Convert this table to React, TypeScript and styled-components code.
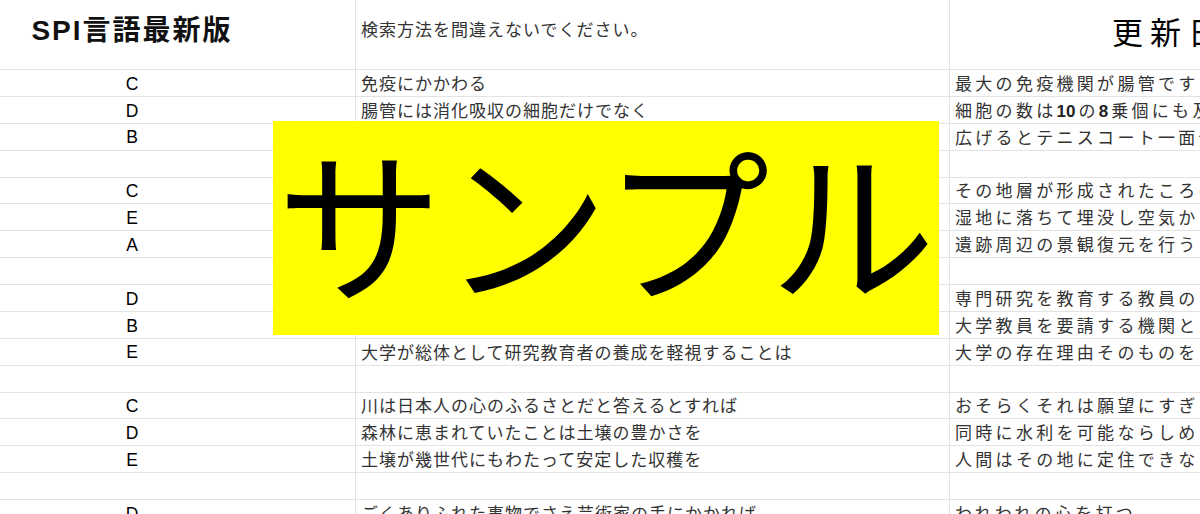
import React from "react";
import styled, { createGlobalStyle } from "styled-components";

const GlobalStyle = createGlobalStyle`
  html, body {
    margin: 0;
    padding: 0;
    background: #ffffff;
    overflow: hidden;
  }
  body {
    width: 1200px;
    height: 514px;
    font-family: "Liberation Sans", "Noto Sans CJK JP", sans-serif;
  }
`;

const Page = styled.div`
  position: relative;
  width: 1200px;
  height: 514px;
  overflow: hidden;
  background: #ffffff;
`;

const Sheet = styled.div`
  display: flex;
  flex-direction: column;
  margin-left: -91px;
  width: 1483px;
`;

const Row = styled.div<{ $header?: boolean }>`
  display: grid;
  grid-template-columns: 447px 594px 442px;
  height: ${(p) => (p.$header ? "70px" : "26.875px")};
  border-bottom: 1px solid #e3e3e3;
  box-sizing: border-box;
  flex: none;
`;

const Cell = styled.div<{ $header?: boolean }>`
  display: flex;
  align-items: center;
  box-sizing: border-box;
  overflow: hidden;
  white-space: nowrap;
  padding-top: ${(p) => (p.$header ? "0" : "3px")};
  padding-bottom: ${(p) => (p.$header ? "8px" : "0")};
`;

const AnswerCell = styled(Cell)`
  justify-content: center;
  border-right: 1px solid #e3e3e3;
  font-family: "Liberation Sans", Arial, sans-serif;
  font-size: 17.5px;
  line-height: 1;
  color: #000;
`;

const TitleText = styled.span`
  font-family: "Liberation Sans", "Noto Sans CJK JP", sans-serif;
  font-weight: 700;
  font-size: 28px;
  letter-spacing: 2px;
  line-height: 1;
  color: #111;
`;

const PhraseCell = styled(Cell)`
  padding-left: 5px;
  border-right: 1px solid #e3e3e3;
  font-family: "Liberation Sans", "Noto Sans CJK JP", sans-serif;
  font-size: 17px;
  letter-spacing: 1px;
  line-height: 1;
  color: #333;
`;

const MeaningCell = styled(Cell)<{ $indent?: number }>`
  padding-left: ${(p) => (p.$indent ?? 5)}px;
  font-family: "Liberation Sans", "Noto Sans CJK JP", sans-serif;
  font-size: 17px;
  letter-spacing: 3.3px;
  line-height: 1;
  color: #333;
`;

const Num = styled.span`
  font-family: "Liberation Sans", Arial, sans-serif;
  font-weight: 700;
  letter-spacing: 0;
  margin-right: 3px;
  color: #222;
`;

const DateHeading = styled.span`
  font-family: "Noto Sans CJK JP", sans-serif;
  font-size: 31px;
  letter-spacing: 7px;
  line-height: 1;
  color: #000;
`;

const SampleStamp = styled.div`
  position: absolute;
  left: 273px;
  top: 121px;
  width: 666px;
  height: 214px;
  box-sizing: border-box;
  padding-bottom: 20px;
  background: #ffff00;
  display: flex;
  align-items: center;
  justify-content: center;
  font-family: "Noto Sans CJK JP", sans-serif;
  font-size: 166px;
  line-height: 1;
  color: #000;
  white-space: nowrap;
`;

type Item = { a: string; b: string; c: React.ReactNode };

const rows: Item[] = [
  { a: "C", b: "免疫にかかわる", c: "最大の免疫機関が腸管です" },
  {
    a: "D",
    b: "腸管には消化吸収の細胞だけでなく",
    c: (
      <>
        細胞の数は<Num>10</Num>の<Num>8</Num>乗個にも及ぶ
      </>
    ),
  },
  { a: "B", b: "その表面積は", c: "広げるとテニスコート一面分" },
  { a: "", b: "", c: "" },
  { a: "C", b: "花粉の分析によって", c: "その地層が形成されたころの" },
  { a: "E", b: "花粉は", c: "湿地に落ちて埋没し空気から" },
  { a: "A", b: "この方法を使って", c: "遺跡周辺の景観復元を行う" },
  { a: "", b: "", c: "" },
  { a: "D", b: "大学の教育は", c: "専門研究を教育する教員の" },
  { a: "B", b: "社会は", c: "大学教員を要請する機関と" },
  { a: "E", b: "大学が総体として研究教育者の養成を軽視することは", c: "大学の存在理由そのものを" },
  { a: "", b: "", c: "" },
  { a: "C", b: "川は日本人の心のふるさとだと答えるとすれば", c: "おそらくそれは願望にすぎない" },
  { a: "D", b: "森林に恵まれていたことは土壌の豊かさを", c: "同時に水利を可能ならしめ" },
  { a: "E", b: "土壌が幾世代にもわたって安定した収穫を", c: "人間はその地に定住できない" },
  { a: "", b: "", c: "" },
  { a: "D", b: "ごくありふれた事物でさえ芸術家の手にかかれば", c: "われわれの心を打つ" },
];

export default function App() {
  return (
    <>
      <GlobalStyle />
      <Page>
        <Sheet>
          <Row $header>
            <AnswerCell $header>
              <TitleText>SPI言語最新版</TitleText>
            </AnswerCell>
            <PhraseCell $header>検索方法を間違えないでください。</PhraseCell>
            <MeaningCell $header $indent={162}>
              <DateHeading>更新日</DateHeading>
            </MeaningCell>
          </Row>
          {rows.map((r, i) => (
            <Row key={i}>
              <AnswerCell>{r.a}</AnswerCell>
              <PhraseCell>{r.b}</PhraseCell>
              <MeaningCell>{r.c}</MeaningCell>
            </Row>
          ))}
        </Sheet>
        <SampleStamp>サンプル</SampleStamp>
      </Page>
    </>
  );
}
